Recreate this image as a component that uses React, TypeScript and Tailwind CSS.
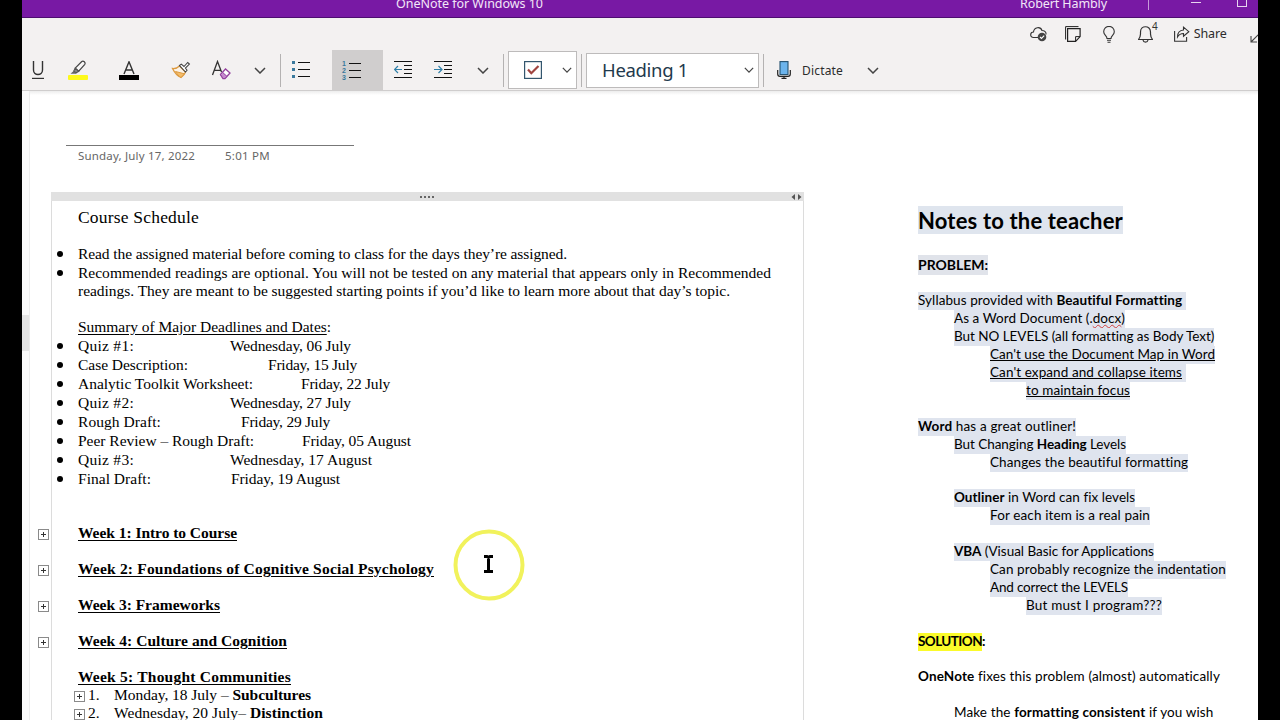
import { useLayoutEffect, useRef, useState } from 'react';
import type { ReactNode } from 'react';
import clsx from 'clsx';

// Stretches or tightens a line of text so that it takes exactly `w` pixels.
function Fit({ w, className, children }: { w: number; className?: string; children: ReactNode }) {
  const ref = useRef<HTMLSpanElement>(null);
  const [spacing, setSpacing] = useState(0);

  useLayoutEffect(() => {
    const el = ref.current;
    if (!el) return;
    el.style.letterSpacing = '0px';
    const natural = el.getBoundingClientRect().width;
    const next = (w - natural) / (el.textContent?.length || 1);
    el.style.letterSpacing = `${next}px`;
    setSpacing(next);
  }, [w]);

  return (
    <span
      ref={ref}
      className={clsx('inline-block whitespace-pre', className)}
      style={{ letterSpacing: spacing }}
    >
      {children}
    </span>
  );
}

function Chevron({ small }: { small?: boolean }) {
  return (
    <svg
      className={clsx('shrink-0', small ? 'w-[10px] h-[6px]' : 'w-[12px] h-[7px]')}
      viewBox="0 0 12 7"
      fill="none"
      stroke="#444"
      strokeWidth="1.5"
    >
      <path d="M1 1l5 5 5-5" />
    </svg>
  );
}

function Divider() {
  return <div className="w-px h-[33px] bg-[#b4b2b2] shrink-0" />;
}

function HighlighterIcon() {
  return (
    <svg className="w-[22px] h-[22px]" viewBox="0 0 22 22" fill="none">
      <rect x="1" y="16" width="20" height="5" rx="1" fill="#fdf91c" />
      <path d="M8.200 9.200l6.600-6.700c1.500-1.300 4.300 1 3 2.800l-6.300 7z" stroke="#444" strokeWidth="1.200" fill="#f7f6f6" />
      <path d="M8.200 9.200L6.700 12l2.300 2 2.700-1.700z" stroke="#555" strokeWidth="1.100" fill="#888" />
      <path d="M6.500 12L3.500 14.700h5l.8-.8z" fill="#666" />
    </svg>
  );
}

function BrushIcon() {
  return (
    <svg className="w-[20px] h-[18px]" viewBox="0 0 20 18" fill="none">
      <path d="M1.500 7.500c3 .3 5-.5 7-2.500l6 6c-1 2.500-2.500 4-4.500 5.500C6 15 3.500 11.500 1.500 7.500z" fill="#fbf3e8" stroke="#dd9a40" strokeWidth="1.300" />
      <path d="M4.500 10.500l9 2.300-3.500 3.700c-2.500-1.500-4-3.500-5.500-6z" fill="#f5bd6a" stroke="#dd9a40" />
      <path d="M8.500 4.500l1.800-1.300 2.700 2.300 3.700-4 1.700 1.600-4 4 1.600 2.200-1.500 1.700z" fill="#fff" stroke="#444" strokeWidth="1.100" />
    </svg>
  );
}

function ClearFormatIcon() {
  return (
    <svg className="w-[20px] h-[20px]" viewBox="0 0 20 20" fill="none">
      <path d="M1.500 15L6.500 1.500 10.500 12M3.200 10.300h6.500" stroke="#333" strokeWidth="1.300" />
      <path d="M9.500 14.500l5-5.500 4.500 4-5 5.500h-2z" fill="#fff" stroke="#94419f" strokeWidth="1.300" />
      <path d="M9.500 14.500l2-2.200 4.400 4-1.900 2.200h-2z" fill="#c58ace" stroke="#94419f" />
    </svg>
  );
}

function BulletsIcon() {
  return (
    <svg className="w-[18px] h-[18px]" viewBox="0 0 18 18">
      {[1, 8, 15].map((y) => (
        <g key={y}>
          <rect y={y - 1} width="3" height="3" fill="#39789c" />
          <rect x="6" y={y} width="12" height="1" fill="#111" />
        </g>
      ))}
    </svg>
  );
}

function NumbersIcon() {
  return (
    <div className="flex items-center gap-[3px]">
      <div className="flex flex-col font-['Liberation_Sans'] text-[7px] leading-[7px] text-[#39789c] font-bold">
        <span>1</span>
        <span>2</span>
        <span>3</span>
      </div>
      <div className="flex flex-col gap-[6px]">
        <div className="w-[12px] h-px bg-[#111]" />
        <div className="w-[12px] h-px bg-[#111]" />
        <div className="w-[12px] h-px bg-[#111]" />
      </div>
    </div>
  );
}

function IndentIcon({ right }: { right?: boolean }) {
  return (
    <svg className="w-[18px] h-[18px]" viewBox="0 0 18 18" fill="none">
      <path d="M0 .5h18M10 4.500h8M10 8.500h8M10 12.500h8M0 16.500h18" stroke="#111" />
      <path
        d={right ? 'M0 8.500h8M4.500 5l3.500 3.500-3.500 3.500' : 'M8 8.500H.5M4 5L.5 8.500 4 12'}
        stroke="#2f7fa8"
        strokeWidth="1.200"
      />
    </svg>
  );
}

function MicIcon() {
  return (
    <svg className="w-[14px] h-[18px]" viewBox="0 0 14 18" fill="none">
      <rect x="3" y="0.600" width="8" height="13" fill="#6cb4ec" stroke="#24506e" strokeWidth="1.100" />
      <path d="M.7 9v4c0 1.500 1 2.400 2.300 2.400h8c1.300 0 2.300-.9 2.300-2.400V9M7 15.500v2M4.500 17.400h5" stroke="#222" strokeWidth="1.200" />
    </svg>
  );
}

function FormatBar() {
  return (
    <div className="flex items-center h-[40px]">
      <div className="w-[32px] flex justify-center">
        <svg className="w-[12px] h-[18px]" viewBox="0 0 12 18" fill="none" stroke="#333">
          <path d="M1.500 0v9c0 6 9 6 9 0V0" strokeWidth="1.400" />
          <path d="M0 17.400h12" strokeWidth="1.200" />
        </svg>
      </div>
      <div className="w-[48px] flex justify-center">
        <HighlighterIcon />
      </div>
      <div className="w-[54px] flex justify-center">
        <svg className="w-[20px] h-[19px]" viewBox="0 0 20 19" fill="none">
          <path d="M5 13L10 .8 15 13M6.700 9h6.600" stroke="#333" strokeWidth="1.400" />
          <rect y="14" width="20" height="5" fill="#000" />
        </svg>
      </div>
      <div className="w-[49px] flex justify-center">
        <BrushIcon />
      </div>
      <div className="w-[32px] flex justify-center">
        <ClearFormatIcon />
      </div>
      <div className="w-[43px] flex justify-center pl-[2px]">
        <Chevron />
      </div>
      <Divider />
      <div className="w-[40px] flex justify-center">
        <BulletsIcon />
      </div>
      <div className="ml-[11px] w-[51px] h-[40px] bg-[#d0cece] flex items-center pl-[10px]">
        <NumbersIcon />
      </div>
      <div className="w-[40px] flex justify-center">
        <IndentIcon />
      </div>
      <div className="w-[40px] flex justify-center">
        <IndentIcon right />
      </div>
      <div className="w-[40px] flex justify-center">
        <Chevron />
      </div>
      <Divider />
      <div className="ml-[4px] w-[69px] h-[38px] bg-white border border-[#bdbbbb] flex items-center pl-[15px] pr-[4px] justify-between">
        <svg className="w-[18px] h-[18px]" viewBox="0 0 18 18" fill="none">
          <rect x="0.600" y="0.600" width="16.800" height="16.800" stroke="#33566e" strokeWidth="1.200" />
          <path d="M4 8.500l3.300 3.700L14.500 5" stroke="#a04440" strokeWidth="2.200" />
        </svg>
        <Chevron small />
      </div>
      <div className="ml-[4px]">
        <Divider />
      </div>
      <div className="ml-[4px] w-[173px] h-[35px] bg-white border border-[#bdbbbb] flex items-center pl-[15px] pr-[4px] justify-between font-['Noto_Sans',sans-serif] text-[18.500px] text-[#1f3a4d]">
        <Fit w={86}>Heading 1</Fit>
        <Chevron small />
      </div>
      <div className="ml-[4px]">
        <Divider />
      </div>
      <div className="ml-[13px]">
        <MicIcon />
      </div>
      <Fit w={41} className="ml-[11px] mt-[2px] font-['Noto_Sans',sans-serif] text-[12px] text-[#2c2c2c]">
        Dictate
      </Fit>
      <div className="ml-[24px]">
        <Chevron />
      </div>
    </div>
  );
}

function TopIcons() {
  return (
    <div className="flex items-center h-[32px] pl-[1008px] whitespace-nowrap">
      <svg className="w-[17px] h-[16px] shrink-0" viewBox="0 0 17 16" fill="none">
        <path d="M8 11.500H3.500c-4 0-3.500-5.500 0-5.500C4 1 10.500 0 12 4.500c2.500 0 4.500 1.500 4 4" stroke="#333" strokeWidth="1.100" />
        <circle cx="12" cy="11" r="4.300" fill="#444" />
        <path d="M10 11l1.500 1.500 2.700-2.800" stroke="#fff" strokeWidth="1.100" />
      </svg>
      <svg className="ml-[18px] w-[16px] h-[16px] shrink-0" viewBox="0 0 16 16" fill="none" stroke="#222">
        <path d="M.6 13.500V.6H13.500" />
        <path d="M2.600 2.600h12.500v8l-4.500 4.800h-8z" strokeWidth="1.200" />
        <path d="M15 10.600h-4.400V15" />
      </svg>
      <svg className="ml-[22px] w-[12px] h-[17px] shrink-0" viewBox="0 0 12 17" fill="none" stroke="#333" strokeWidth="1.100">
        <path d="M4 12.500C4 9.500.7 9 .7 5.700a5.300 5.300 0 0110.600 0C11.300 9 8 9.500 8 12.500zM4 14.300h4M4.500 16.200h3" />
      </svg>
      <svg className="ml-[23px] w-[15px] h-[17px] shrink-0" viewBox="0 0 15 17" fill="none" stroke="#333" strokeWidth="1.200">
        <path d="M.5 13.500h14c-1.500-2-2-3-2-5.500V6c0-7-10-7-10 0v2c0 2.500-.5 3.500-2 5.500zM5 14c.5 2.700 4.500 2.700 5 0" />
      </svg>
      <span className="-ml-[1px] -mt-[15px] w-[6px] font-['Noto_Sans',sans-serif] text-[10px] text-[#333]">4</span>
      <svg className="ml-[16px] w-[16px] h-[16px] shrink-0" viewBox="0 0 16 16" fill="none" stroke="#333" strokeWidth="1.100">
        <path d="M.6 5v10.300h12V11" />
        <path d="M9.500 1.200l5.300 4.500-5.300 4.500V7.500C6.500 7.500 5 8.500 3.500 11c0-4 2-6.700 6-7z" />
      </svg>
      <Fit w={33} className="ml-[4px] mt-[1px] font-['Noto_Sans',sans-serif] text-[12.500px] text-[#2c2c2c]">
        Share
      </Fit>
      <svg className="ml-[23px] w-[12px] h-[12px] mt-[5px] shrink-0" viewBox="0 0 12 12" fill="none" stroke="#444" strokeWidth="1.100">
        <path d="M1 5v6h6M1 11L11.500 .5" />
      </svg>
    </div>
  );
}

function TitleBar() {
  return (
    <div className="flex h-[18px] bg-[#7819a4] border-b border-[#4d0d70] text-[#f3e6f8] font-['Noto_Sans',sans-serif] text-[12.500px] leading-[18px] overflow-hidden">
      <Fit w={147} className="ml-[374px] -mt-[5px] h-[18px]">
        OneNote for Windows 10
      </Fit>
      <Fit w={87} className="ml-[477px] -mt-[5px] h-[18px]">
        Robert Hambly
      </Fit>
      <div className="ml-[41px] w-px h-[10px] bg-[#c79ad9]" />
      <div className="ml-[42px] mt-[2px] w-[10px] h-px bg-[#e8d4f0]" />
      <div className="ml-[36px] -mt-[3px] w-[10px] h-[10px] border border-[#e8d4f0]" />
    </div>
  );
}

function Plus({ className }: { className?: string }) {
  return (
    <svg className={clsx('w-[11px] h-[11px] shrink-0 mb-[2px]', className)} viewBox="0 0 11 11" fill="none">
      <rect x="0.500" y="0.500" width="10" height="10" fill="#fff" stroke="#8a8a8a" />
      <path d="M3 5.500h5M5.500 3v5" stroke="#333" />
    </svg>
  );
}

const deadlines = [
  { name: 'Quiz #1:', nameW: 56, gap: 96, date: 'Wednesday, 06 July', dateW: 121 },
  { name: 'Case Description:', nameW: 110, gap: 80, date: 'Friday, 15 July', dateW: 89 },
  { name: 'Analytic Toolkit Worksheet:', nameW: 175, gap: 48, date: 'Friday, 22 July', dateW: 89 },
  { name: 'Quiz #2:', nameW: 56, gap: 96, date: 'Wednesday, 27 July', dateW: 121 },
  { name: 'Rough Draft:', nameW: 83, gap: 80, date: 'Friday, 29 July', dateW: 89 },
  { name: 'Peer Review – Rough Draft:', nameW: 176, gap: 48, date: 'Friday, 05 August', dateW: 109 },
  { name: 'Quiz #3:', nameW: 56, gap: 96, date: 'Wednesday, 17 August', dateW: 142 },
  { name: 'Final Draft:', nameW: 73, gap: 80, date: 'Friday, 19 August', dateW: 109 },
];

const weeks = [
  { title: 'Week 1: Intro to Course', w: 159 },
  { title: 'Week 2: Foundations of Cognitive Social Psychology', w: 356 },
  { title: 'Week 3: Frameworks', w: 142 },
  { title: 'Week 4: Culture and Cognition', w: 209 },
  { title: 'Week 5: Thought Communities', w: 213, open: true },
];

function Bullet() {
  return <span className="w-[6px] h-[6px] rounded-full bg-black ml-[5px] mr-[15px] mb-[6px] shrink-0" />;
}

function Outline() {
  return (
    <div className="w-[753px] h-[530px] shrink-0 ml-[21px]">
      <div className="h-[9px] bg-[#e1e1e1] flex items-center">
        <div className="flex gap-[2px] ml-[369px]">
          <i className="w-[2px] h-[2px] bg-[#666]" />
          <i className="w-[2px] h-[2px] bg-[#666]" />
          <i className="w-[2px] h-[2px] bg-[#666]" />
          <i className="w-[2px] h-[2px] bg-[#666]" />
        </div>
        <svg className="ml-auto mr-[2px] w-[11px] h-[6px]" viewBox="0 0 11 6" fill="#555">
          <path d="M4 0v6L0.500 3zM7 0v6l3.500-3z" />
        </svg>
      </div>
      <div className="h-[521px] border-x border-[#dcdcdc] font-['Liberation_Serif',serif] text-[15.5px] leading-[18px] text-black">
        <div className="h-[25px] flex items-end pl-[26px] text-[17.500px]">
          <Fit w={121}>Course Schedule</Fit>
        </div>
        <div className="h-[37px] flex items-end">
          <Bullet />
          <Fit w={489}>Read the assigned material before coming to class for the days they’re assigned.</Fit>
        </div>
        <div className="h-[19px] flex items-end">
          <Bullet />
          <Fit w={693}>
            Recommended readings are optional. You will not be tested on any material that appears only in Recommended
          </Fit>
        </div>
        <div className="h-[18px] flex items-end pl-[26px]">
          <Fit w={652}>
            readings. They are meant to be suggested starting points if you’d like to learn more about that day’s topic.
          </Fit>
        </div>
        <div className="h-[36px] flex items-end pl-[26px]">
          <Fit w={253}>
            <span className="underline underline-offset-2">Summary of Major Deadlines and Dates</span>:
          </Fit>
        </div>
        {deadlines.map((d) => (
          <div key={d.name} className="h-[19px] flex items-end">
            <Bullet />
            <Fit w={d.nameW}>{d.name}</Fit>
            <span className="shrink-0" style={{ width: d.gap }} />
            <Fit w={d.dateW}>{d.date}</Fit>
          </div>
        ))}
        <div className="h-[18px]" />
        {weeks.map((week) => (
          <div key={week.title} className="h-[36px] flex items-end font-bold">
            {week.open ? <span className="w-[26px]" /> : <Plus className="-ml-[14px] mr-[29px]" />}
            <Fit w={week.w} className="underline underline-offset-2">
              {week.title}
            </Fit>
          </div>
        ))}
        <div className="h-[18px] flex items-end pl-[22px]">
          <Plus />
          <span className="ml-[3px] w-[26px]">1.</span>
          <Fit w={197}>
            Monday, 18 July – <b>Subcultures</b>
          </Fit>
        </div>
        <div className="h-[18px] flex items-end pl-[22px]">
          <Plus />
          <span className="ml-[3px] w-[26px]">2.</span>
          <Fit w={209}>
            Wednesday, 20 July– <b>Distinction</b>
          </Fit>
        </div>
      </div>
    </div>
  );
}

type Note = { text: ReactNode; w: number; className?: string };

const notes: Note[] = [
  { text: <>Syllabus provided with <b>Beautiful Formatting</b></>, w: 264, className: 'mt-[17px] pr-[4px]' },
  {
    text: <>As a Word Document (.<span className="underline decoration-wavy decoration-[#d04040] decoration-1 underline-offset-1">docx</span>)</>,
    w: 171,
    className: 'ml-[36px]',
  },
  { text: 'But NO LEVELS (all formatting as Body Text)', w: 260, className: 'ml-[36px]' },
  { text: <u>Can't use the Document Map in Word</u>, w: 225, className: 'ml-[72px]' },
  { text: <u>Can't expand and collapse items</u>, w: 192, className: 'ml-[72px] pr-[4px]' },
  { text: <u>to maintain focus</u>, w: 104, className: 'ml-[108px]' },
  { text: <><b>Word</b> has a great outliner!</>, w: 158, className: 'mt-[18px]' },
  { text: <>But Changing <b>Heading</b> Levels</>, w: 172, className: 'ml-[36px]' },
  { text: 'Changes the beautiful formatting', w: 198, className: 'ml-[72px]' },
  { text: <><b>Outliner</b> in Word can fix levels</>, w: 181, className: 'ml-[36px] mt-[17px]' },
  { text: 'For each item is a real pain', w: 160, className: 'ml-[72px]' },
  { text: <><b>VBA</b> (Visual Basic for Applications</>, w: 200, className: 'ml-[36px] mt-[18px]' },
  { text: 'Can probably recognize the indentation', w: 236, className: 'ml-[72px]' },
  { text: 'And correct the LEVELS', w: 138, className: 'ml-[72px]' },
  { text: 'But must I program???', w: 136, className: 'ml-[108px]' },
];

function TeacherNotes() {
  return (
    <div className="ml-[114px] pt-[14px] flex flex-col items-start shrink-0 w-[340px] font-['Lato',sans-serif] text-[13.5px] leading-[16px] text-black">
      <div className="h-[28px] pt-[2px] bg-[#dfe5ee] text-[22px] leading-[26px] font-bold">
        <Fit w={205}>Notes to the teacher</Fit>
      </div>
      <div className="mt-[21px] h-[20px] pt-[2px] bg-[#e0e3ea] font-bold text-[14px]">
        <Fit w={70}>PROBLEM:</Fit>
      </div>
      {notes.map((note) => (
        <div key={note.w} className={clsx('h-[18px] bg-[#dfe4ee]', note.className)}>
          <Fit w={note.w}>{note.text}</Fit>
        </div>
      ))}
      <div className="mt-[18px] h-[18px] flex font-bold">
        <Fit w={64} className="bg-[#fbfb2a] h-[18px]">
          SOLUTION
        </Fit>
        <span>:</span>
      </div>
      <div className="mt-[17px] h-[18px]">
        <Fit w={302}>
          <b>OneNote</b> fixes this problem (almost) automatically
        </Fit>
      </div>
      <div className="mt-[18px] ml-[36px] h-[18px]">
        <Fit w={259}>
          Make the <b>formatting consistent</b> if you wish
        </Fit>
      </div>
    </div>
  );
}

function Pointer() {
  return (
    <svg className="absolute left-[453px] top-[529px] w-[72px] h-[72px]" viewBox="0 0 72 72" fill="none">
      <circle cx="36" cy="36" r="33.500" stroke="#f1f25c" strokeWidth="4" />
      <path d="M31 27.500h3l1.500 1 1.500-1h3M31 42.500h3l1.500-1 1.500 1h3M35.500 27.500v15" stroke="#000" strokeWidth="3" />
    </svg>
  );
}

export default function App() {
  return (
    <div className="relative w-[1280px] h-[720px] bg-black overflow-hidden">
      <div className="mx-[22px] h-[720px] bg-white overflow-hidden flex flex-col">
        <TitleBar />
        <div className="h-[73px] shrink-0 bg-[#f3f1f1] border-b border-[#cfcdcd]">
          <TopIcons />
          <FormatBar />
        </div>
        <div className="flex h-[629px] shrink-0">
          <div className="w-[8px] shrink-0 border-r border-[#ececec] bg-[#fafafa] pt-[224px]">
            <div className="h-[36px] bg-[#e4e4e4]" />
          </div>
          <div className="w-[1228px] shrink-0">
            <div className="h-[4px] bg-linear-to-b from-[#ededed] to-white" />
            <div className="mt-[50px] ml-[36px] w-[288px] h-px bg-[#777]" />
            <div className="flex h-[46px] pl-[48px] pt-[2px] font-['Noto_Sans',sans-serif] text-[11.5px] leading-[16px] text-[#666]">
              <Fit w={117}>Sunday, July 17, 2022</Fit>
              <Fit w={45} className="ml-[30px]">
                5:01 PM
              </Fit>
            </div>
            <div className="flex">
              <Outline />
              <TeacherNotes />
            </div>
          </div>
        </div>
      </div>
      <Pointer />
    </div>
  );
}
